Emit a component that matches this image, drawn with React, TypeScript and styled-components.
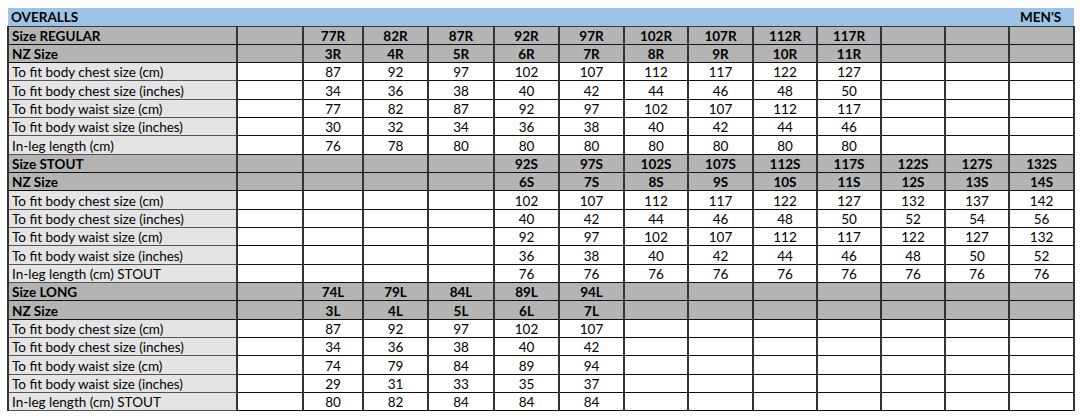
import React from "react";
import styled, { createGlobalStyle } from "styled-components";

type Tone = "head" | "label" | "plain";

type Section = {
  title: string;
  sizes: string[];
  nz: string[];
  rows: { label: string; values: string[] }[];
};

const REGULAR: Section = {
  title: "Size REGULAR",
  sizes: ["", "77R", "82R", "87R", "92R", "97R", "102R", "107R", "112R", "117R", "", "", ""],
  nz: ["", "3R", "4R", "5R", "6R", "7R", "8R", "9R", "10R", "11R", "", "", ""],
  rows: [
    { label: "To fit body chest size (cm)", values: ["", "87", "92", "97", "102", "107", "112", "117", "122", "127", "", "", ""] },
    { label: "To fit body chest size (inches)", values: ["", "34", "36", "38", "40", "42", "44", "46", "48", "50", "", "", ""] },
    { label: "To fit body waist size (cm)", values: ["", "77", "82", "87", "92", "97", "102", "107", "112", "117", "", "", ""] },
    { label: "To fit body waist size (inches)", values: ["", "30", "32", "34", "36", "38", "40", "42", "44", "46", "", "", ""] },
    { label: "In-leg length (cm)", values: ["", "76", "78", "80", "80", "80", "80", "80", "80", "80", "", "", ""] },
  ],
};

const STOUT: Section = {
  title: "Size STOUT",
  sizes: ["", "", "", "", "92S", "97S", "102S", "107S", "112S", "117S", "122S", "127S", "132S"],
  nz: ["", "", "", "", "6S", "7S", "8S", "9S", "10S", "11S", "12S", "13S", "14S"],
  rows: [
    { label: "To fit body chest size (cm)", values: ["", "", "", "", "102", "107", "112", "117", "122", "127", "132", "137", "142"] },
    { label: "To fit body chest size (inches)", values: ["", "", "", "", "40", "42", "44", "46", "48", "50", "52", "54", "56"] },
    { label: "To fit body waist size (cm)", values: ["", "", "", "", "92", "97", "102", "107", "112", "117", "122", "127", "132"] },
    { label: "To fit body waist size (inches)", values: ["", "", "", "", "36", "38", "40", "42", "44", "46", "48", "50", "52"] },
    { label: "In-leg length (cm) STOUT", values: ["", "", "", "", "76", "76", "76", "76", "76", "76", "76", "76", "76"] },
  ],
};

const LONG: Section = {
  title: "Size LONG",
  sizes: ["", "74L", "79L", "84L", "89L", "94L", "", "", "", "", "", "", ""],
  nz: ["", "3L", "4L", "5L", "6L", "7L", "", "", "", "", "", "", ""],
  rows: [
    { label: "To fit body chest size (cm)", values: ["", "87", "92", "97", "102", "107", "", "", "", "", "", "", ""] },
    { label: "To fit body chest size (inches)", values: ["", "34", "36", "38", "40", "42", "", "", "", "", "", "", ""] },
    { label: "To fit body waist size (cm)", values: ["", "74", "79", "84", "89", "94", "", "", "", "", "", "", ""] },
    { label: "To fit body waist size (inches)", values: ["", "29", "31", "33", "35", "37", "", "", "", "", "", "", ""] },
    { label: "In-leg length (cm) STOUT", values: ["", "80", "82", "84", "84", "84", "", "", "", "", "", "", ""] },
  ],
};

const SECTIONS = [REGULAR, STOUT, LONG];
const COLS = [229, 66, 60, 65, 66, 65, 65, 64, 65, 64, 64, 64, 64, 65];

const GlobalStyle = createGlobalStyle`
  html, body {
    margin: 0;
    background: #ffffff;
  }
  body {
    padding: 8px 7px;
    font-family: Lato, "Liberation Sans", Arial, sans-serif;
    color: #000;
  }
`;

const Sheet = styled.table`
  border-collapse: collapse;
  table-layout: fixed;
  width: 1066px;
  font-size: 13.5px;
  line-height: 13px;
`;

const Row = styled.tr<{ $title?: boolean }>`
  height: ${(p) => (p.$title ? "18px" : "18.33px")};
`;

const TitleCell = styled.td`
  padding: 1px 3px 0;
  background: #9dc3e6;
  font-weight: 700;
  border-bottom: 1px solid #3a3a3a;
`;

const TitleBar = styled.div`
  display: flex;
  justify-content: space-between;
  padding-right: 10px;
`;

const Cell = styled.td<{ $tone: Tone; $bold?: boolean; $first?: boolean }>`
  padding: 2px 3px 0;
  white-space: nowrap;
  overflow: hidden;
  font-weight: ${(p) => (p.$bold ? 700 : 400)};
  text-align: ${(p) => (p.$first ? "left" : "center")};
  background: ${(p) =>
    p.$tone === "head" ? "#b4b4b4" : p.$tone === "label" ? "#e4e4e4" : "#ffffff"};
  border-top: 1px solid ${(p) => (p.$first && p.$tone === "label" ? "#555" : "#111")};
  border-bottom: 1px solid ${(p) => (p.$first && p.$tone === "label" ? "#555" : "#111")};
  border-left: 2px solid #333;
  border-right: 2px solid #333;
`;

function HeaderRow({ label, cells }: { label: string; cells: string[] }) {
  return (
    <Row>
      <Cell $tone="head" $bold $first>
        {label}
      </Cell>
      {cells.map((c, i) => (
        <Cell key={i} $tone="head" $bold>
          {c}
        </Cell>
      ))}
    </Row>
  );
}

function DataRow({ label, values }: { label: string; values: string[] }) {
  return (
    <Row>
      <Cell $tone="label" $first>
        {label}
      </Cell>
      {values.map((v, i) => (
        <Cell key={i} $tone="plain">
          {v}
        </Cell>
      ))}
    </Row>
  );
}

export default function App() {
  return (
    <>
      <GlobalStyle />
      <Sheet>
        <colgroup>
          {COLS.map((w, i) => (
            <col key={i} style={{ width: w }} />
          ))}
        </colgroup>
        <tbody>
          <Row $title>
            <TitleCell colSpan={COLS.length}>
              <TitleBar>
                <span>OVERALLS</span>
                <span>MEN'S</span>
              </TitleBar>
            </TitleCell>
          </Row>
          {SECTIONS.map((s) => (
            <React.Fragment key={s.title}>
              <HeaderRow label={s.title} cells={s.sizes} />
              <HeaderRow label="NZ Size" cells={s.nz} />
              {s.rows.map((r) => (
                <DataRow key={r.label} label={r.label} values={r.values} />
              ))}
            </React.Fragment>
          ))}
        </tbody>
      </Sheet>
    </>
  );
}
